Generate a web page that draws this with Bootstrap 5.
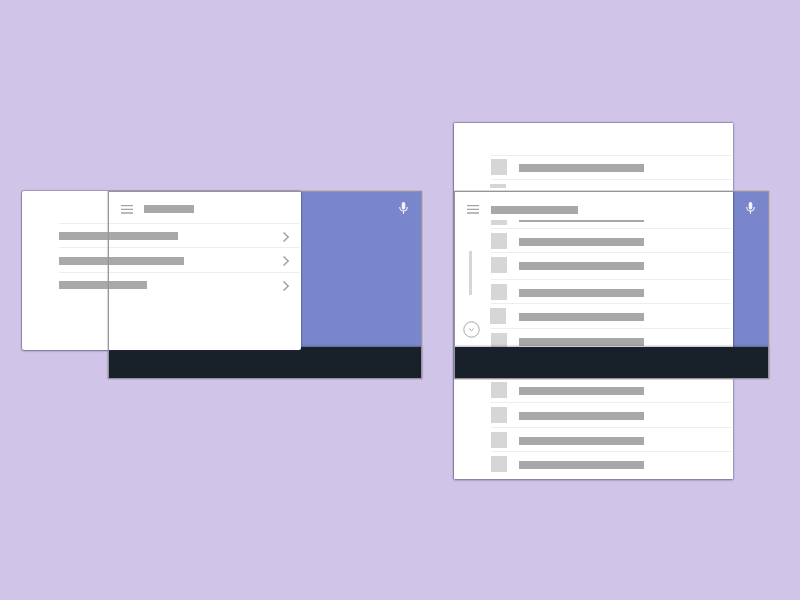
<!DOCTYPE html>
<html lang="en">
<head>
<meta charset="utf-8">
<title>Menu and list sheets</title>
<link href="https://cdn.jsdelivr.net/npm/bootstrap@5.3.0/dist/css/bootstrap.min.css" rel="stylesheet">
<style>
html,body{height:100%;margin:0}
body{background:#d1c4e9;overflow:hidden;position:relative;font-family:"Liberation Sans",sans-serif}
.stage{position:absolute;inset:0;filter:blur(.35px)}
.win-back{position:absolute;background:#7986cb;z-index:1}
.win-one{left:108px;top:191px;width:314px;height:188px}
.win-two{left:454px;top:191px;width:315px;height:188px}
.mic-spot{position:absolute;top:11px;right:14px;line-height:0}
.win-line{position:absolute;border:1px solid #98949f;box-shadow:0 0 0 .5px rgba(150,148,160,.7);z-index:5;pointer-events:none}
.dark-strip{position:absolute;background:#18202a;box-shadow:0 -1px 2px rgba(40,40,60,.35)}
.strip-one{left:108px;top:347px;width:314px;height:32px;z-index:2}
.strip-two{left:454px;top:347px;width:315px;height:32px;z-index:4}
.paper{position:absolute;background:#fff;z-index:3;border-radius:2px;box-shadow:0 1px 2px rgba(50,40,80,.55),-1px 0 1px rgba(50,40,80,.3),0 -1px 1px rgba(50,40,80,.25),1px 0 1px rgba(50,40,80,.12)}
.paper-one{left:22px;top:191px;width:279px;height:159px}
.paper-two{left:454px;top:123px;width:279px;height:356px;padding-top:32px;border-radius:0}
.menu-head{height:32px;padding-left:99px;padding-top:4px}
.burger{display:block;flex:none;width:12px;height:9px}
.burger-gap{width:11px;flex:none}
.grey-bar{display:block;height:8px;background:#a8a8a8;flex:none}
.bar-119{width:119px}.bar-125{width:125px}.bar-88{width:88px}.bar-50{width:50px}.bar-87{width:87px}
.menu-list{margin-left:37px;margin-right:1px}
.menu-row{height:24px;border-top:1px solid #eee;padding-top:1px;padding-right:11px}
.menu-row.row-wide{height:25px}
.chev{display:block;width:7px;height:11px;flex:none;transform:translate(.5px,.5px)}
.item-row{height:24px;margin-left:37px;margin-right:2px;border-top:1px solid #eee;padding-top:4px}
.item-row.row-first{padding-top:3px}
.row-25{height:25px}.row-27{height:27px}.row-28{height:28px}
.thumb{width:16px;height:16px;background:#d6d6d6;flex:none;margin-right:12px}
.nudge{transform:translateX(-1px)}
.item-row .grey-bar{margin-top:5px}
.over-head{position:absolute;left:454px;top:188px;width:279px;height:32px;background:#fff;z-index:3;padding:17px 0 0 13px}
.over-head .burger-gap{width:12px}
.over-head .grey-bar{margin-top:1px}
.scroll-mark{position:absolute;left:469px;top:251px;width:3px;height:44px;background:#d6d6d6;z-index:3}
.down-ring{position:absolute;left:463px;top:321px;width:17px;height:17px;z-index:3;display:block}
</style>
</head>
<body>
<main class="stage">

  <section aria-label="Menu sheet">
    <div class="win-back win-one"><span class="mic-spot"><svg width="9" height="12" viewBox="0 0 9 12"><rect x="2.700" y="0" width="3.600" height="7.500" rx="1.800" fill="#f2f3fb"/><path d="M.7 5C.7 7.400 2.400 8.900 4.500 8.900S8.300 7.400 8.300 5" fill="none" stroke="#f2f3fb" stroke-width="1.100"/><rect x="4" y="9" width="1" height="3" fill="#f2f3fb"/></svg></span></div>
    <div class="dark-strip strip-one"></div>
    <div class="paper paper-one">
      <div class="menu-head d-flex align-items-center">
        <svg class="burger" viewBox="0 0 12 9"><path d="M0 .6h12M0 4.300h12M0 8h12" stroke="#a4a4a4" stroke-width="1.300" fill="none"/></svg>
        <span class="burger-gap"></span>
        <span class="grey-bar bar-50"></span>
      </div>
      <div class="menu-list">
        <div class="menu-row d-flex align-items-center justify-content-between"><span class="grey-bar bar-119"></span><svg class="chev" viewBox="0 0 7 11"><path d="M1 1l4.700 4.500L1 10" fill="none" stroke="#a0a0a0" stroke-width="1.500"/></svg></div>
        <div class="menu-row row-wide d-flex align-items-center justify-content-between"><span class="grey-bar bar-125"></span><svg class="chev" viewBox="0 0 7 11"><path d="M1 1l4.700 4.500L1 10" fill="none" stroke="#a0a0a0" stroke-width="1.500"/></svg></div>
        <div class="menu-row d-flex align-items-center justify-content-between"><span class="grey-bar bar-88"></span><svg class="chev" viewBox="0 0 7 11"><path d="M1 1l4.700 4.500L1 10" fill="none" stroke="#a0a0a0" stroke-width="1.500"/></svg></div>
      </div>
    </div>
    <div class="win-line win-one"></div>
  </section>

  <section aria-label="Item list sheet">
    <div class="win-back win-two"><span class="mic-spot"><svg width="9" height="12" viewBox="0 0 9 12"><rect x="2.700" y="0" width="3.600" height="7.500" rx="1.800" fill="#f2f3fb"/><path d="M.7 5C.7 7.400 2.400 8.900 4.500 8.900S8.300 7.400 8.300 5" fill="none" stroke="#f2f3fb" stroke-width="1.100"/><rect x="4" y="9" width="1" height="3" fill="#f2f3fb"/></svg></span></div>
    <div class="paper paper-two">
      <div class="item-row row-first d-flex"><span class="thumb"></span><span class="grey-bar bar-125"></span></div>
      <div class="item-row row-25 d-flex"><span class="thumb nudge"></span><span class="grey-bar bar-125"></span></div>
      <div class="item-row d-flex"><span class="thumb"></span><span class="grey-bar bar-125"></span></div>
      <div class="item-row d-flex"><span class="thumb"></span><span class="grey-bar bar-125"></span></div>
      <div class="item-row row-27 d-flex"><span class="thumb"></span><span class="grey-bar bar-125"></span></div>
      <div class="item-row d-flex"><span class="thumb"></span><span class="grey-bar bar-125"></span></div>
      <div class="item-row row-25 d-flex"><span class="thumb nudge"></span><span class="grey-bar bar-125"></span></div>
      <div class="item-row row-25 d-flex"><span class="thumb"></span><span class="grey-bar bar-125"></span></div>
      <div class="item-row d-flex"><span class="thumb"></span><span class="grey-bar bar-125"></span></div>
      <div class="item-row row-25 d-flex"><span class="thumb"></span><span class="grey-bar bar-125"></span></div>
      <div class="item-row row-25 d-flex"><span class="thumb"></span><span class="grey-bar bar-125"></span></div>
      <div class="item-row d-flex"><span class="thumb"></span><span class="grey-bar bar-125"></span></div>
      <div class="item-row row-28 d-flex"><span class="thumb"></span><span class="grey-bar bar-125"></span></div>
    </div>
    <div class="over-head d-flex align-items-start">
      <svg class="burger" viewBox="0 0 12 9"><path d="M0 .6h12M0 4.300h12M0 8h12" stroke="#a4a4a4" stroke-width="1.300" fill="none"/></svg>
      <span class="burger-gap"></span>
      <span class="grey-bar bar-87"></span>
    </div>
    <div class="scroll-mark"></div>
    <svg class="down-ring" viewBox="0 0 17 17"><circle cx="8.500" cy="8.500" r="7.700" fill="#fff" stroke="#a8a8a8" stroke-width="1"/><path d="M6.300 7.600l2.200 2 2.200-2" fill="none" stroke="#a0a0a0" stroke-width="1"/></svg>
    <div class="dark-strip strip-two"></div>
    <div class="win-line win-two"></div>
  </section>

</main>
<script src="https://cdn.jsdelivr.net/npm/bootstrap@5.3.0/dist/js/bootstrap.bundle.min.js"></script>
</body>
</html>
